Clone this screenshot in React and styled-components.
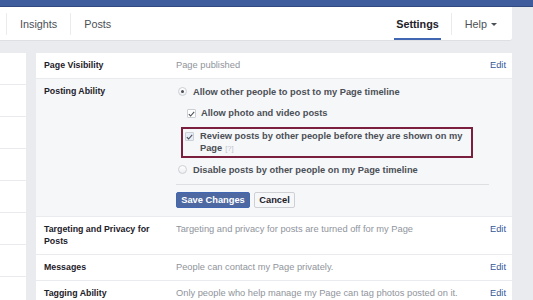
import React from 'react';
import styled, { createGlobalStyle } from 'styled-components';

const GlobalStyle = createGlobalStyle`
  html, body {
    margin: 0;
    padding: 0;
    background: #e9ebee;
    font-family: "Liberation Sans", Arial, Helvetica, sans-serif;
    overflow: hidden;
  }
`;

const BlueBar = styled.div`
  height: 6px;
  background: #3f5c9c;
  border-bottom: 1px solid #30497f;
`;

const Nav = styled.div`
  width: 512px;
  height: 34px;
  background: #fff;
  display: flex;
  align-items: stretch;
  justify-content: space-between;
  border-bottom: 1px solid #dddfe2;
  box-sizing: border-box;
  border-radius: 0 0 3px 0;
`;

const NavGroup = styled.div`
  display: flex;
  align-items: stretch;
  padding: ${({ right }) => (right ? '0 15px 0 0' : '0 0 0 6px')};
`;

const Divider = styled.div`
  width: 1px;
  align-self: center;
  height: 22px;
  background: #e9ebee;
`;

const Tab = styled.div`
  display: flex;
  align-items: center;
  gap: 4px;
  margin: 0 ${({ gap }) => gap}px;
  padding: 0 ${({ active }) => (active ? 2 : 0)}px;
  font-size: 10.8px;
  font-weight: ${({ active }) => (active ? 'bold' : 'normal')};
  color: ${({ active }) => (active ? '#1d2129' : '#4b4f56')};
  border-bottom: 2px solid ${({ active }) => (active ? '#4267b2' : 'transparent')};
  border-top: 2px solid transparent;
`;

const Caret = styled.span`
  width: 0;
  height: 0;
  border-left: 3px solid transparent;
  border-right: 3px solid transparent;
  border-top: 3px solid #4b4f56;
  margin-top: 1px;
`;

const Body = styled.div`
  display: flex;
  gap: 10px;
  padding-top: 12px;
`;

const Sidebar = styled.div`
  width: 26px;
  background: #fff;
  display: flex;
  flex-direction: column;
  height: 260px;
`;

const SideItem = styled.div`
  height: 31px;
  border-bottom: 1px solid #e9ebee;
`;

const Panel = styled.div`
  width: 476px;
  background: #fff;
  height: 260px;
`;

const Row = styled.div`
  display: grid;
  grid-template-columns: 132px 1fr 17px;
  padding: 6px 6px ${({ editing }) => (editing ? 8 : 7)}px 8px;
  background: ${({ editing }) => (editing ? '#f6f7f9' : '#fff')};
  border-bottom: 1px solid #e9ebee;
  font-size: 9.3px;
  line-height: 12px;
`;

const Label = styled.div`
  font-weight: bold;
  font-size: 8.8px;
  color: #1d2129;
  padding-right: 14px;
`;

const Value = styled.div`
  color: #90949c;
`;

const Edit = styled.div`
  color: #365899;
  text-align: right;
`;

const Options = styled.div`
  display: flex;
  flex-direction: column;
  color: #4b4f56;
  font-weight: bold;
`;

const Option = styled.div`
  display: flex;
  align-items: flex-start;
  gap: ${({ gap }) => gap}px;
  margin-top: ${({ top }) => top}px;
  padding-left: ${({ indent }) => indent}px;
`;

const Radio = styled.span`
  width: 9px;
  height: 9px;
  margin-top: 1px;
  border-radius: 50%;
  border: 1px solid #ccd0d5;
  background: linear-gradient(#fff, #eceef1);
  box-sizing: border-box;
  display: flex;
  align-items: center;
  justify-content: center;
  flex: none;

  &::after {
    content: '';
    width: 3px;
    height: 3px;
    border-radius: 50%;
    background: ${({ checked }) => (checked ? '#4b4f56' : 'transparent')};
  }
`;

const Box = styled.span`
  width: 9px;
  height: 9px;
  margin-top: 2px;
  border: 1px solid #ccd0d5;
  border-radius: 1px;
  background: ${({ focus }) => (focus ? '#e7edf8' : '#fff')};
  box-sizing: border-box;
  display: flex;
  align-items: center;
  justify-content: center;
  flex: none;
`;

const Highlight = styled.div`
  margin: 8px 0 0 5px;
  width: 292px;
  box-sizing: border-box;
  border: 2px solid #7b1f3e;
  padding: 1px 6px 1px 2px;
`;

const Help = styled.span`
  font-weight: normal;
  font-size: 7.5px;
  color: #bec3c9;
  margin-left: 3px;
`;

const Rule = styled.div`
  height: 1px;
  background: #dddfe2;
  margin-top: 8px;
`;

const Buttons = styled.div`
  display: flex;
  gap: 4px;
  margin-top: 7px;
`;

const Button = styled.button`
  box-sizing: border-box;
  height: 16px;
  padding: 0;
  white-space: nowrap;
  font-family: inherit;
  font-size: 9.3px;
  font-weight: bold;
  line-height: 14px;
  border-radius: 2px;
  border: 1px solid ${({ primary }) => (primary ? '#4267b2' : '#ced0d4')};
  background: ${({ primary }) => (primary ? '#4e69a2' : '#f6f7f9')};
  color: ${({ primary }) => (primary ? '#fff' : '#1d2129')};
  width: ${({ w }) => w}px;
`;

const Check = () => (
  <svg width="7" height="6" viewBox="0 0 7 6">
    <path d="M0.8 3.2 L2.6 5 L6.2 0.8" fill="none" stroke="#4b4f56" strokeWidth="1.1" />
  </svg>
);

const rows = [
  { label: 'Targeting and Privacy for Posts', value: 'Targeting and privacy for posts are turned off for my Page' },
  { label: 'Messages', value: 'People can contact my Page privately.' },
  { label: 'Tagging Ability', value: 'Only people who help manage my Page can tag photos posted on it.' },
];

export default function App() {
  return (
    <>
      <GlobalStyle />
      <BlueBar />
      <Nav>
        <NavGroup>
          <Divider />
          <Tab gap={13}>Insights</Tab>
          <Divider />
          <Tab gap={13}>Posts</Tab>
        </NavGroup>
        <NavGroup right>
          <Tab active gap={10}>Settings</Tab>
          <Divider />
          <Tab gap={13} style={{ marginRight: 0 }}>Help <Caret /></Tab>
        </NavGroup>
      </Nav>
      <Body>
        <Sidebar>
          {Array.from({ length: 8 }).map((_, i) => (
            <SideItem key={i} />
          ))}
        </Sidebar>
        <Panel>
          <Row>
            <Label>Page Visibility</Label>
            <Value>Page published</Value>
            <Edit>Edit</Edit>
          </Row>
          <Row editing>
            <Label>Posting Ability</Label>
            <Options>
              <Option gap={6} indent={2} top={1}>
                <Radio checked />
                Allow other people to post to my Page timeline
              </Option>
              <Option gap={5} indent={11} top={9}>
                <Box><Check /></Box>
                Allow photo and video posts
              </Option>
              <Highlight>
                <Option gap={6} indent={0} top={0}>
                  <Box focus><Check /></Box>
                  <span>
                    Review posts by other people before they are shown on my
                    <br />
                    Page<Help>[?]</Help>
                  </span>
                </Option>
              </Highlight>
              <Option gap={6} indent={2} top={6}>
                <Radio />
                Disable posts by other people on my Page timeline
              </Option>
              <Rule />
              <Buttons>
                <Button primary w={74}>Save Changes</Button>
                <Button w={41}>Cancel</Button>
              </Buttons>
            </Options>
            <div />
          </Row>
          {rows.map((r) => (
            <Row key={r.label}>
              <Label>{r.label}</Label>
              <Value>{r.value}</Value>
              <Edit>Edit</Edit>
            </Row>
          ))}
        </Panel>
      </Body>
    </>
  );
}
